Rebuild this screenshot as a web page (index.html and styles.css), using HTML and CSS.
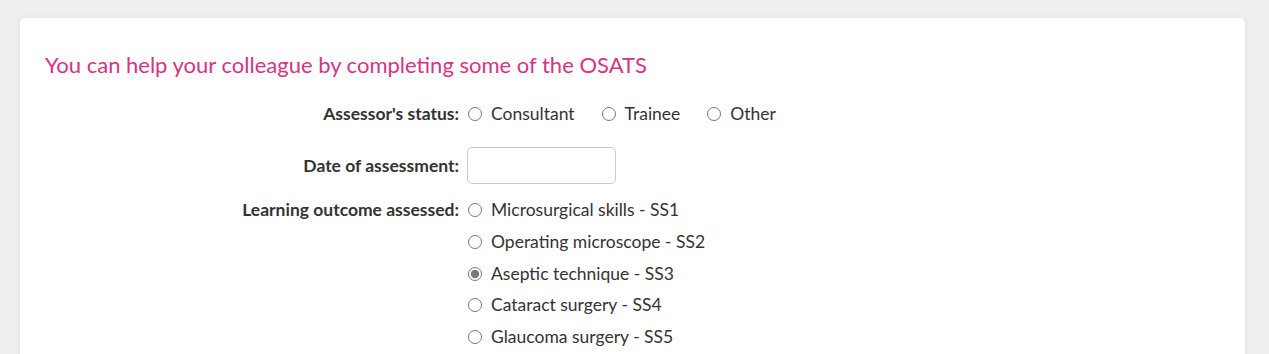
FILE: index.html
```html
<!DOCTYPE html>
<html lang="en">

<head>
    <meta charset="UTF-8">
    <meta name="viewport" content="width=device-width, initial-scale=1.0">
    <title>OSATS</title>
    <link rel="stylesheet" href="styles.css">
</head>

<body>
    <div class="panel">
        <h2 class="panelTitle">You can help your colleague by completing some of the OSATS</h2>
        <form class="osatsForm">
            <div class="formRow statusRow">
                <label class="rowLabel">Assessor's status:</label>
                <div class="choices inline">
                    <label class="choice"><input type="radio" name="status"> Consultant</label>
                    <label class="choice"><input type="radio" name="status"> Trainee</label>
                    <label class="choice"><input type="radio" name="status"> Other</label>
                </div>
            </div>
            <div class="formRow dateRow">
                <label class="rowLabel">Date of assessment:</label>
                <input class="dateInput" type="text">
            </div>
            <div class="formRow">
                <label class="rowLabel">Learning outcome assessed:</label>
                <div class="choices">
                    <label class="choice"><input type="radio" name="outcome"> Microsurgical skills - SS1</label>
                    <label class="choice"><input type="radio" name="outcome"> Operating microscope - SS2</label>
                    <label class="choice"><input type="radio" name="outcome" checked> Aseptic technique - SS3</label>
                    <label class="choice"><input type="radio" name="outcome"> Cataract surgery - SS4</label>
                    <label class="choice"><input type="radio" name="outcome"> Glaucoma surgery - SS5</label>
                </div>
            </div>
        </form>
    </div>
</body>

</html>
```

FILE: styles.css
```css
* {
    margin: 0;
    padding: 0;
    box-sizing: border-box;
}

html,
body {
    height: 100%;
    overflow: hidden;
}

body {
    background: #f0efed;
    font-family: Lato, "Open Sans", sans-serif;
    color: #333;
    padding: 18px 24px 0 20px;
}

.panel {
    background: #fff;
    border-radius: 5px;
    box-shadow: 0 0 6px rgba(0, 0, 0, .08);
    padding: 32px 25px 0;
    min-height: 400px;
}

.panelTitle {
    font-size: 22px;
    font-weight: 400;
    color: #d63384;
    line-height: 30px;
    margin-bottom: 22px;
}

.formRow {
    display: flex;
    align-items: flex-start;
}

.statusRow {
    margin-bottom: 21px;
}

.rowLabel {
    width: 422px;
    text-align: right;
    font-weight: 700;
    font-size: 17.5px;
    line-height: 24px;
    padding-right: 8px;
    color: #333;
}

.dateRow {
    align-items: center;
    margin-bottom: 14px;
}

.dateInput {
    width: 149px;
    height: 37px;
    border: 1px solid #ccc;
    border-radius: 5px;
    font: inherit;
}

.choices {
    display: flex;
    flex-direction: column;
    gap: 7.8px;
}

.choices.inline {
    flex-direction: row;
    gap: 26px;
}

.choice {
    font-size: 17.5px;
    line-height: 24px;
    display: flex;
    align-items: center;
    gap: 9px;
    color: #333;
}

.choice input {
    width: 14px;
    height: 14px;
    margin: 0 0 0 1px;
    accent-color: #7a7a7a;
}
```
